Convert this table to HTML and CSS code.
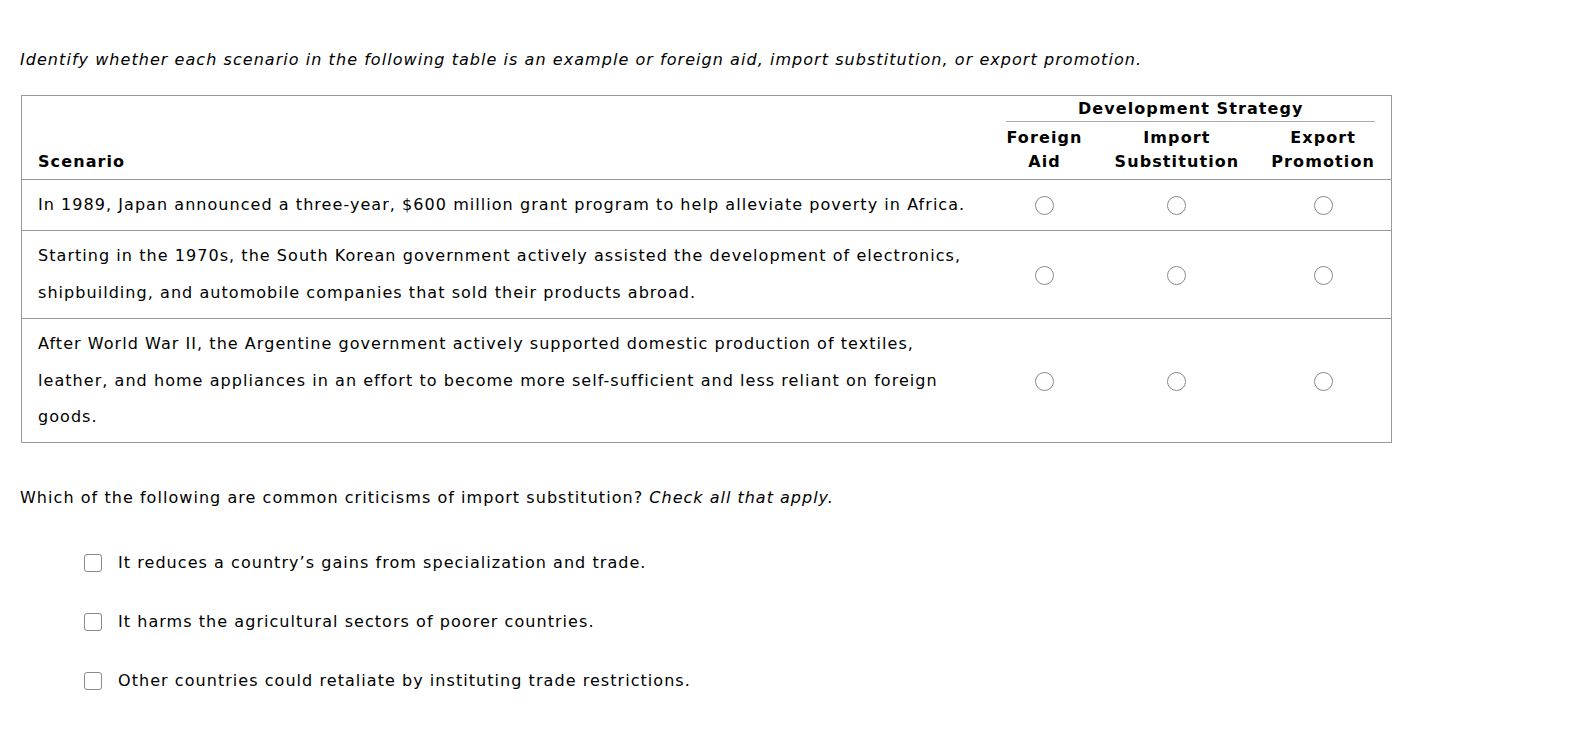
FILE: index.html
```html
<!DOCTYPE html>
<html lang="en">
<head>
<meta charset="utf-8">
<title>Development Strategy</title>
<link rel="stylesheet" href="styles.css">
</head>
<body>
<div class="page">
  <p class="intro">Identify whether each scenario in the following table is an example or foreign aid, import substitution, or export promotion.</p>

  <table class="grid">
    <thead>
      <tr>
        <th class="scen-head" rowspan="2">Scenario</th>
        <th class="group-head" colspan="3"><div class="group-label">Development Strategy</div></th>
      </tr>
      <tr>
        <th class="opt-head">Foreign<br>Aid</th>
        <th class="opt-head">Import<br>Substitution</th>
        <th class="opt-head">Export<br>Promotion</th>
      </tr>
    </thead>
    <tbody>
      <tr>
        <td class="scen">In 1989, Japan announced a three-year, $600 million grant program to help alleviate poverty in Africa.</td>
        <td class="opt"><input type="radio" name="r1" class="radio"></td>
        <td class="opt"><input type="radio" name="r1" class="radio"></td>
        <td class="opt"><input type="radio" name="r1" class="radio"></td>
      </tr>
      <tr>
        <td class="scen">Starting in the 1970s, the South Korean government actively assisted the development of electronics, shipbuilding, and automobile companies that sold their products abroad.</td>
        <td class="opt"><input type="radio" name="r2" class="radio"></td>
        <td class="opt"><input type="radio" name="r2" class="radio"></td>
        <td class="opt"><input type="radio" name="r2" class="radio"></td>
      </tr>
      <tr>
        <td class="scen">After World War II, the Argentine government actively supported domestic production of textiles, leather, and home appliances in an effort to become more self-sufficient and less reliant on foreign goods.</td>
        <td class="opt"><input type="radio" name="r3" class="radio"></td>
        <td class="opt"><input type="radio" name="r3" class="radio"></td>
        <td class="opt"><input type="radio" name="r3" class="radio"></td>
      </tr>
    </tbody>
  </table>

  <p class="question">Which of the following are common criticisms of import substitution? <em class="hint">Check all that apply.</em></p>

  <ul class="choices">
    <li class="choice"><input type="checkbox" class="check"><span class="choice-text">It reduces a country’s gains from specialization and trade.</span></li>
    <li class="choice"><input type="checkbox" class="check"><span class="choice-text">It harms the agricultural sectors of poorer countries.</span></li>
    <li class="choice"><input type="checkbox" class="check"><span class="choice-text">Other countries could retaliate by instituting trade restrictions.</span></li>
  </ul>
</div>
</body>
</html>
```

FILE: styles.css
```css
html, body {
  margin: 0;
  padding: 0;
  background: #ffffff;
}

body {
  font-family: "DejaVu Sans", Verdana, sans-serif;
  font-size: 16px;
  color: #000000;
  letter-spacing: 1.05px;
}

.page {
  padding: 48px 20px 0 20px;
}

.intro {
  margin: 0;
  font-style: italic;
  line-height: 23px;
  letter-spacing: 1.05px;
}

.hint {
  letter-spacing: 1px;
}

.grid {
  margin-top: 24px;
  margin-left: 1px;
  width: 1371px;
  border-collapse: collapse;
  border: 1px solid #999999;
}

.grid th {
  font-weight: bold;
  padding: 0 16px;
  letter-spacing: 1.1px;
}

.scen-head {
  text-align: left;
  vertical-align: bottom;
  line-height: 24px;
  padding-bottom: 5px !important;
  border-bottom: 1px solid #999999;
}

.group-head {
  text-align: center;
}

.group-label {
  line-height: 23px;
  padding: 1px 0 1px 0;
  border-bottom: 1px solid #aaaaaa;
}

.opt-head {
  text-align: center;
  line-height: 24px;
  padding: 4px 16px 5px 16px !important;
  white-space: nowrap;
  border-bottom: 1px solid #999999;
}

.grid td {
  border-top: 1px solid #999999;
  padding: 7px 16px;
  line-height: 36.4px;
}

.scen {
  text-align: left;
}

.opt {
  text-align: center;
  vertical-align: middle;
  width: 1%;
  white-space: nowrap;
}

.radio {
  appearance: none;
  -webkit-appearance: none;
  display: inline-block;
  width: 19px;
  height: 19px;
  margin: 0;
  border: 1px solid #8a8a8a;
  border-radius: 50%;
  background: #ffffff;
  vertical-align: middle;
  box-sizing: border-box;
}

.question {
  margin: 43px 0 0 0;
  line-height: 23px;
}

.choices {
  list-style: none;
  margin: 42px 0 0 0;
  padding: 0 0 0 64px;
}

.choice {
  display: flex;
  align-items: center;
  height: 23px;
  margin-bottom: 36px;
}

.check {
  appearance: none;
  -webkit-appearance: none;
  width: 18px;
  height: 18px;
  margin: 0 16px 0 0;
  border: 1px solid #8a8a8a;
  border-radius: 3px;
  background: #ffffff;
  box-sizing: border-box;
  flex: none;
}

.choice-text {
  line-height: 23px;
}
```
